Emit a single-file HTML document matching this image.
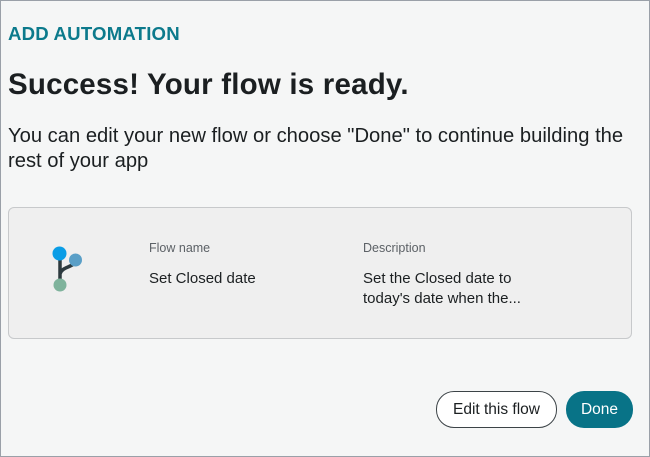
<!DOCTYPE html>
<html><head><style>
html,body{margin:0;padding:0}
body{width:650px;height:457px;background:#f5f6f6;font-family:"Liberation Sans",sans-serif;color:#1b1f21;position:relative;overflow:hidden;box-sizing:border-box;border:1px solid #9aa0a8}
.t{position:absolute;left:7px;top:22px;font-size:18.6px;font-weight:bold;color:#0c7a8c;letter-spacing:0.2px}
.h{position:absolute;left:7px;top:67px;font-size:29.5px;font-weight:bold;letter-spacing:0.2px}
.p{position:absolute;left:7px;top:123px;font-size:20.2px;line-height:25px;width:620px}
.card{position:absolute;left:7px;top:206px;width:624px;height:132px;background:#efefef;border:1px solid #c7c9cb;border-radius:6px;box-sizing:border-box}
.lbl{position:absolute;font-size:12.5px;color:#5c6166}
.val{position:absolute;font-size:15px;line-height:20px}
.btn{position:absolute;top:390px;height:37px;border-radius:18px;box-sizing:border-box;font-size:15.5px;display:flex;align-items:center;justify-content:center}
</style></head><body>
<div class="t">ADD AUTOMATION</div>
<div class="h">Success! Your flow is ready.</div>
<div class="p">You can edit your new flow or choose "Done" to continue building the rest of your app</div>
<div class="card"></div>
<svg style="position:absolute;left:-1px;top:-1px" width="650" height="457">
<path d="M60 253 V285 M60 274 C62 266 74 268 76 260" stroke="#2d3a3f" stroke-width="3.5" fill="none"/>
<circle cx="59.5" cy="253.5" r="7" fill="#0a9de6"/>
<circle cx="75.5" cy="260" r="6.5" fill="#5a9fc7"/>
<circle cx="60" cy="285" r="6.5" fill="#7fb39c"/>
</svg>
<div class="lbl" style="left:148px;top:240px">Flow name</div>
<div class="val" style="left:148px;top:268px">Set Closed date</div>
<div class="lbl" style="left:362px;top:240px">Description</div>
<div class="val" style="left:362px;top:268px">Set the Closed date to<br>today's date when the...</div>
<div class="btn" style="left:435px;width:121px;border:1px solid #3c4347;background:#fff">Edit this flow</div>
<div class="btn" style="left:565px;width:67px;background:#087387;color:#fff">Done</div>
</body></html>
